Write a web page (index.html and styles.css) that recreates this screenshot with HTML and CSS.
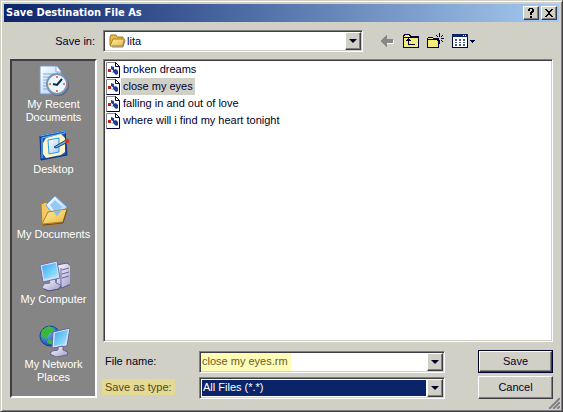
FILE: index.html
```html
<!DOCTYPE html>
<html lang="en">
<head>
<meta charset="utf-8">
<title>Save Destination File As</title>
<link rel="stylesheet" href="styles.css">
</head>
<body>
<svg class="defs" aria-hidden="true">
  <defs>
    <linearGradient id="gold" x1="0" y1="0" x2="1" y2="1"><stop offset="0" stop-color="#fff3a6"/><stop offset="1" stop-color="#e8b53c"/></linearGradient>
    <linearGradient id="screen" x1="0" y1="0" x2="1" y2="1"><stop offset="0" stop-color="#3aa5f2"/><stop offset="1" stop-color="#a9f0ff"/></linearGradient>
    <linearGradient id="paper" x1="0" y1="0" x2="1" y2="1"><stop offset="0" stop-color="#ffffff"/><stop offset="1" stop-color="#a9cdf5"/></linearGradient>
    <linearGradient id="metal" x1="0" y1="0" x2="1" y2="1"><stop offset="0" stop-color="#ffffff"/><stop offset="1" stop-color="#9c9ccb"/></linearGradient>
    <radialGradient id="globe" cx=".35" cy=".3" r=".8"><stop offset="0" stop-color="#6cc2ff"/><stop offset="1" stop-color="#0b3a9c"/></radialGradient>
    <symbol id="media-file" viewBox="0 0 14 16">
      <path d="M1 .5h9l3.500 3.500V15.500H1z" fill="#fff"/>
      <path d="M.5 15.500V.5H10" fill="none" stroke="#888"/>
      <path d="M9.500 .5v4h4M9.500 .5l4 4v11H.5" fill="none" stroke="#00003c"/>
      <path d="M5 4l3 1v4L5 7z" fill="#1c3c98"/>
      <path d="M7 8l3-1 2 2v3l-2 1-3-3z" fill="#1c3c98"/>
      <path d="M2 7h3v3H2z" fill="#b8281c"/>
      <path d="M5 9l2 1v1z" fill="#6c80c0"/>
    </symbol>
  </defs>
</svg>
<main class="dialog">
  <header class="titlebar">
    <h1>Save Destination File As</h1>
    <button class="caption" type="button" aria-label="Help"><svg width="10" height="10" viewBox="0 0 10 10" shape-rendering="crispEdges"><path d="M2 1h1V0h4v1h1v3H7v1H6v2H4V4h1V3h1V1H4v2H2zM4 8h2v2H4z"/></svg></button>
    <button class="caption" type="button" aria-label="Close"><svg width="10" height="10" viewBox="0 0 10 10" shape-rendering="crispEdges"><path d="M1 1h2v1h1v1h2V2h1V1h2v1H8v1H7v1H6v2h1v1h1v1h1v1H7V8H6V7H4v1H3v1H1V8h1V7h1V6h1V4H3V3H2V2H1z"/></svg></button>
  </header>

  <div class="location">
    <label for="folder">Save in:</label>
    <div class="combo">
      <svg class="folder" width="17" height="14" viewBox="0 0 17 14"><path d="M1 11V3l1-2h5l1 2h6v3" fill="#e9bd47" stroke="#a7771c"/><path d="M1 12l3-7h11.500l-2 7z" fill="url(#gold)" stroke="#ad7e20"/><path d="M3 13h11l2-7" fill="none" stroke="#73664a" stroke-width=".8"/></svg>
      <select id="folder"><option>lita</option></select>
      <span class="arrow"></span>
    </div>
    <div class="tools">
      <button class="tool back" type="button" aria-label="Back" disabled><svg width="15" height="13" viewBox="0 0 15 13" shape-rendering="crispEdges"><path d="M6 1v4h8v4H7v4L2 8z" fill="#fff"/><path d="M6 0h1v4h6v4H7v4H6L5 11 0 6l5-5z" fill="#888"/></svg></button>
      <button class="tool up" type="button" aria-label="Up one level"><svg width="16" height="14" viewBox="0 0 16 14" shape-rendering="crispEdges"><path d="M.5 13.500v-11l1-2h5l1 2h8v11z" fill="#f4ed78" stroke="#00003c"/><path d="M0 3h15" stroke="#00003c"/><path d="M5 4h1v1h1v1h1v1H6v3h6v1H5V7H3V6h1V5h1z" fill="#00003c"/></svg></button>
      <button class="tool new" type="button" aria-label="Create new folder"><svg width="17" height="16" viewBox="0 0 17 16" shape-rendering="crispEdges"><path d="M.5 14.500v-9l1-1h4l1 1h5v9z" fill="#f4ed78" stroke="#00003c"/><path d="M0 6.500h11" stroke="#00003c"/><path d="M12 0h1v4h-1zM12 7h1v4h-1zM8 5h3v1H8zM14 5h3v1h-3zM9 2h1v1H9zM10 3h1v1h-1zM15 2h1v1h-1zM14 3h1v1h-1zM14 7h1v1h-1zM15 8h1v1h-1zM10 7h1v1h-1z" fill="#00003c"/></svg></button>
      <button class="tool views" type="button" aria-label="View menu"><svg width="24" height="14" viewBox="0 0 24 14" shape-rendering="crispEdges"><path d="M.5 .5h15v13H.5z" fill="#fff" stroke="#00003c"/><path d="M0 0h16v3H0z" fill="#0a246a"/><path d="M11 1h1v1h-1zM13 1h1v1h-1z" fill="#fff"/><path d="M3 5h2v2H3zM7 5h2v2H7zM11 5h2v2h-2zM3 8h2v1H3zM7 8h2v1H7zM11 8h2v1h-2zM3 10h2v2H3zM7 10h2v2H7zM11 10h2v2h-2z" fill="#46598d"/><path d="M18 6h5v1h-1v1h-1v1h-1V8h-1V7h-1z" fill="#00003c"/></svg></button>
    </div>
  </div>

  <div class="content">
    <nav class="places" aria-label="Places">
      <button type="button"><svg width="32" height="32" viewBox="0 0 32 32"><path d="M2 1h17l4 5v23H2z" fill="url(#paper)" stroke="#7797c7"/><path d="M18 1v6h5" fill="#fff" stroke="#88a9d6"/><path d="M5 9h11M5 12h8M5 15h6M5 18h5M5 21h5M5 24h6" stroke="#75aae2"/><circle cx="20" cy="20" r="11" fill="#56657e"/><circle cx="19" cy="19" r="10" fill="#e9f8fd" stroke="#8292ae" stroke-width="2"/><path d="M19 11v2M19 25v2M11 19h2M25 19h2" stroke="#ef7950" stroke-width="2"/><path d="M24 14l-5 6-4-1" fill="none" stroke="#142546" stroke-width="2"/></svg><span>My Recent Documents</span></button>
      <button type="button"><svg width="32" height="32" viewBox="0 0 32 32"><path d="M2 6L27 1l2 24L3 30z" fill="#1457b8" stroke="#0a307c"/><path d="M2 6L27 1v2L4 8v20" fill="none" stroke="#64b8ff"/><path d="M8 8l15-4 4 4v14l-4 3-15 3-3-4V13z" fill="#fff4c7"/><path d="M10 10l11-2v14l-10 2z" fill="url(#paper)" stroke="#289de7"/><path d="M16 17l12-7 2 2-12 6z" fill="#6ab4eb" stroke="#17447f"/><path d="M27 10l3-1 1 3-3 1z" fill="#d13b17" stroke="#d13b17"/></svg><span>Desktop</span></button>
      <button type="button"><svg width="32" height="32" viewBox="0 0 32 32"><path d="M3 9l5-2 4 4 13 1-5 17-16 1z" fill="#f3c860" stroke="#b57920"/><path d="M8 10L17 1l12 11-11 12z" fill="url(#paper)" stroke="#6aa5dc"/><path d="M12 10l5-5 7 7-6 6z" fill="#92c9f5"/><path d="M4 29l6-12 19-3-4 13z" fill="url(#gold)" stroke="#b57920"/><path d="M15 16l9-1-5 6z" fill="#83bfee"/><path d="M5 30l20-2 4-13" fill="none" stroke="#6e4c26"/></svg><span>My Documents</span></button>
      <button type="button"><svg width="32" height="32" viewBox="0 0 32 32"><path d="M19 5l10-2 4 3v18l-9 4-6-4z" fill="url(#metal)" stroke="#5d5990"/><path d="M23 8v19M24 10l7-2M24 14l7-2M24 18l7-2" stroke="#6564a4"/><path d="M11 20l6-2 1 5 5 2-2 4-11 2-6-3 2-4 6-1z" fill="url(#metal)" stroke="#77739e"/><path d="M2 5L19 1l3 17L5 22z" fill="#dadcf3" stroke="#6d70a4"/><path d="M4 6l14-3 2 13L6 19z" fill="url(#screen)"/><path d="M6 29l5 2 10-2 2-3" fill="none" stroke="#555181"/></svg><span>My Computer</span></button>
      <button type="button"><svg width="32" height="32" viewBox="0 0 32 32"><circle cx="12" cy="11" r="10" fill="url(#globe)" stroke="#174486"/><path d="M4 5l7-4 6 4-5 3-4 6-5-3zM10 14l5 1v5l-6-2z" fill="#3db739"/><path d="M15 7l17-4-3 18-15 2z" fill="#dcdff6" stroke="#6166a2"/><path d="M17 8l13-3-3 14-11 2z" fill="url(#screen)"/><path d="M20 22l5-1v4l5 2-1 3-11 2-6-3 2-3 6-1z" fill="url(#metal)" stroke="#65638d"/></svg><span>My Network Places</span></button>
    </nav>

    <ul class="files" aria-label="Files">
      <li><button type="button"><svg width="14" height="16"><use href="#media-file"/></svg><span>broken dreams</span></button></li>
      <li><button type="button" class="selected"><svg width="14" height="16"><use href="#media-file"/></svg><span>close my eyes</span></button></li>
      <li><button type="button"><svg width="14" height="16"><use href="#media-file"/></svg><span>falling in and out of love</span></button></li>
      <li><button type="button"><svg width="14" height="16"><use href="#media-file"/></svg><span>where will i find my heart tonight</span></button></li>
    </ul>

    <form class="fields">
      <label for="name"><span>File name:</span></label>
      <div class="combo"><input id="name" type="text" value="close my eyes.rm"><span class="arrow"></span></div>
      <button class="push default" type="button">Save</button>
      <label for="type"><span class="marked">Save as type:</span></label>
      <div class="combo"><select id="type" class="active"><option>All Files (*.*)</option></select><span class="arrow"></span></div>
      <button class="push" type="button">Cancel</button>
    </form>
  </div>
  <svg class="grip" width="12" height="12" viewBox="0 0 12 12" aria-hidden="true"><path d="M0 12L12 0M4 12l8-8M8 12l4-4" stroke="#fff"/><path d="M1 12L12 1M5 12l7-7M9 12l3-3" stroke="#808080" stroke-width="2"/></svg>
</main>
</body>
</html>
```
FILE: styles.css
```css
:root {
  --face: #d1d0c7;
  --shadow: #808080;
  --dark: #403c44;
  --ink: #00002c;
  --navy: #0a246a;
}

* { box-sizing: border-box; }

body {
  margin: 0;
  color: var(--ink);
  font: 11px/13px "Liberation Sans", sans-serif;
}

button, input, select {
  margin: 0;
  padding: 0;
  border: 0;
  border-radius: 0;
  outline: 0;
  background: none;
  color: inherit;
  font: inherit;
  appearance: none;
}

svg { display: block; flex: none; }
.defs { position: absolute; width: 0; height: 0; }

.dialog {
  position: relative;
  display: flex;
  flex-direction: column;
  min-height: 100vh;
  padding: 2px;
  background: var(--face);
  border: 1px solid;
  border-color: var(--face) var(--dark) var(--dark) var(--face);
  box-shadow: inset 1px 1px #fff, inset -1px -1px var(--shadow);
}

.titlebar {
  display: flex;
  align-items: center;
  height: 18px;
  margin: 1px;
  padding: 0 2px;
  background: linear-gradient(to right, var(--navy), #a6caf0);
}

.titlebar h1 {
  flex: 1;
  margin: 0;
  color: #fff;
  font: bold 11px/18px "DejaVu Sans Condensed", "Liberation Sans", sans-serif;
}

.caption {
  display: grid;
  place-items: center;
  width: 16px;
  height: 14px;
  margin-left: 2px;
}

.caption, .arrow, .push {
  background: var(--face);
  border: 1px solid;
  border-color: #fff var(--dark) var(--dark) #fff;
  box-shadow: inset -1px -1px var(--shadow);
}

.location {
  display: grid;
  grid-template-columns: 85px minmax(0, 260px) auto;
  column-gap: 8px;
  align-items: center;
  padding: 7px;
}

.location label { text-align: right; }

.combo {
  display: flex;
  height: 22px;
  padding: 1px;
  background: #fff;
  border: 1px solid;
  border-color: var(--shadow) #fff #fff var(--shadow);
  box-shadow: inset 1px 1px var(--dark), inset -1px -1px var(--face);
}

.combo input, .combo select {
  flex: 1;
  width: 0;
  min-width: 0;
  padding: 0 1px;
}

.folder { margin: 2px 0 0 4px; }
.arrow { display: grid; place-items: center; width: 16px; }

.arrow::after {
  content: "";
  border: 4px solid transparent;
  border-top-color: var(--ink);
  border-bottom: 0;
}

.tools { display: flex; align-items: center; gap: 8px; padding-left: 9px; }

.content {
  flex: 1;
  display: grid;
  grid-template-columns: 87px minmax(0, 1fr);
  grid-template-rows: 1fr auto;
  column-gap: 6px;
  padding: 0 7px 10px;
}

.places {
  grid-row: 1 / 3;
  margin-bottom: 1px;
  padding: 4px 0 0;
  background: #858585;
  border: 2px solid;
  border-color: var(--dark) #fff #fff var(--dark);
}

.places button {
  display: flex;
  flex-direction: column;
  align-items: center;
  gap: 1px;
  width: 100%;
  height: 65px;
  color: #fff;
}

.places span { max-width: 78px; }

.files {
  margin: 0;
  padding: 1px;
  list-style: none;
  background: #fff;
  border: 1px solid;
  border-color: var(--shadow) #fff #fff var(--shadow);
  box-shadow: inset 1px 1px var(--dark), inset -1px -1px var(--face);
}

.files button { display: flex; align-items: center; gap: 1px; height: 17px; padding-left: 1px; }
.files span { padding: 1px 2px; line-height: 15px; }
.files .selected span { background: var(--face); }

.fields {
  display: grid;
  grid-template-columns: 96px minmax(0, 1fr) 75px;
  row-gap: 3px;
  align-items: center;
  padding-top: 8px;
}

.fields .combo { margin-right: 33px; }
.marked { margin-left: -3px; padding: 2px 3px; background: #e3da96; color: #554816; }
#name { background: linear-gradient(to right, #fffcb8 90px, #fff 90px); color: #665b25; }
.active { background: var(--navy); color: #fff; border: 1px solid #fff; }
.push { height: 23px; }
.default { outline: 1px solid var(--ink); outline-offset: -1px; border-width: 2px; }
.fields label { padding-left: 2px; }
.grip { position: absolute; right: 2px; bottom: 2px; }
```
